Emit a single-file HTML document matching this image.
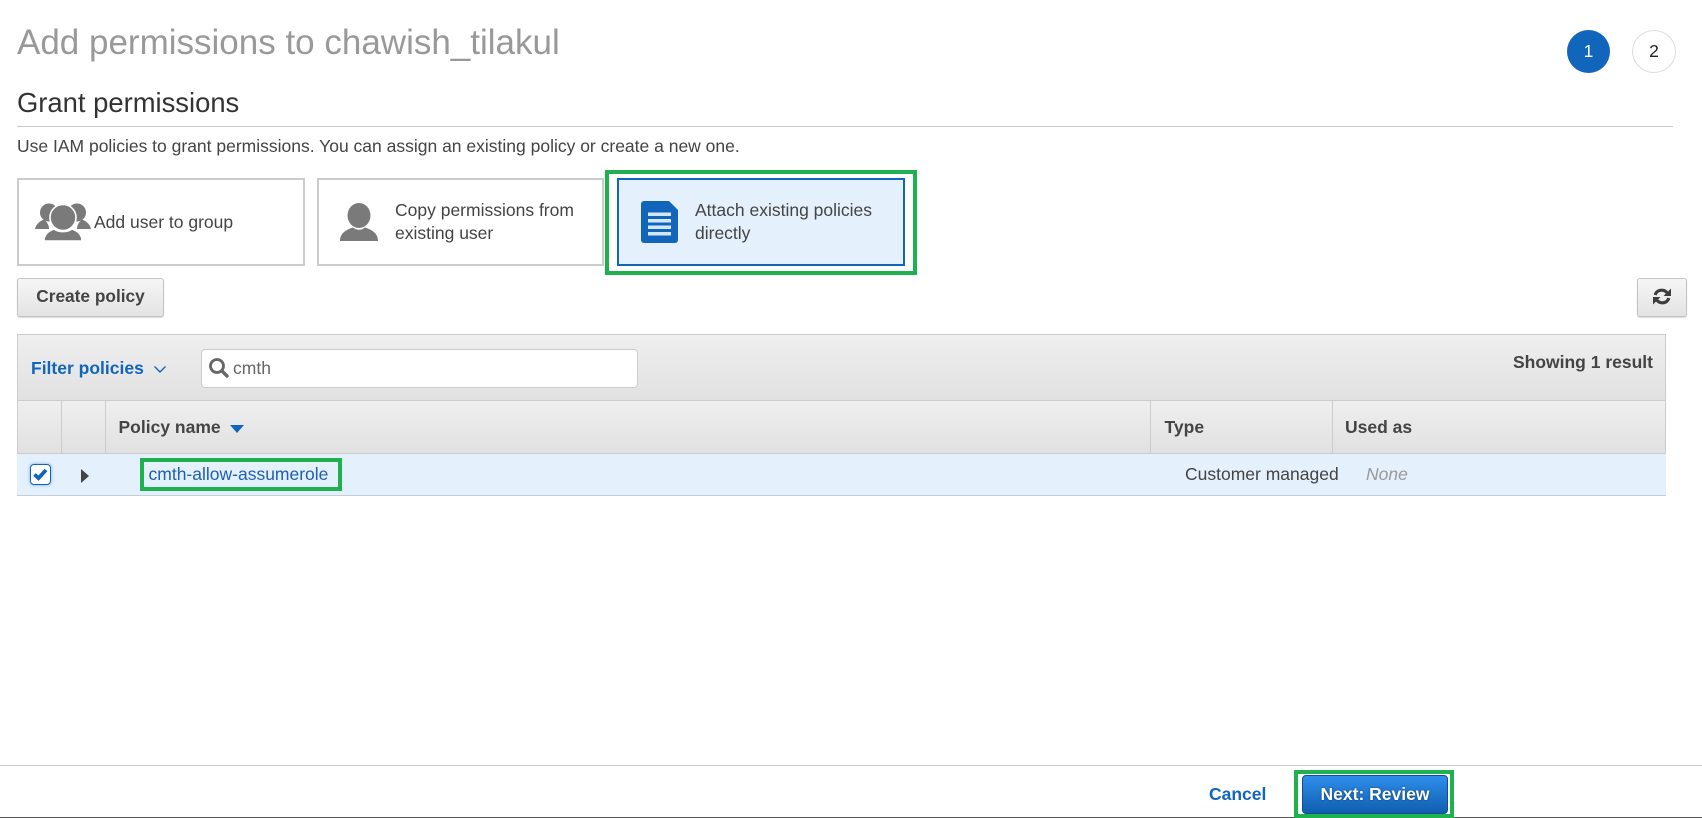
<!DOCTYPE html>
<html><head><meta charset="utf-8"><style>
html,body{margin:0;padding:0;background:#fff}
body{position:relative;width:1702px;height:818px;overflow:hidden;font-family:"Liberation Sans",Arial,sans-serif;color:#444}
.a{position:absolute;white-space:nowrap}
.b{position:absolute;box-sizing:border-box}
.g{position:absolute;box-sizing:border-box;border:4px solid #1fb14f}
.btn{position:absolute;box-sizing:border-box;border:1px solid #c4c4c4;border-radius:3px;background:linear-gradient(#f6f6f6,#e3e3e3);box-shadow:0 1px 1px rgba(0,0,0,.15)}
.bold{font-weight:bold}
</style></head><body>
<div class="a" style="left:17px;top:21px;font-size:35px;line-height:44px;color:#999">Add permissions to chawish_tilakul</div>
<div class="b" style="left:1567px;top:30px;width:43px;height:43px;border-radius:50%;background:#1166bb;color:#fff;font-size:17.5px;line-height:43px;text-align:center">1</div>
<div class="b" style="left:1632px;top:30px;width:44px;height:43px;border-radius:50%;background:#fff;border:1px solid #ddd;color:#222;font-size:17.5px;line-height:41px;text-align:center">2</div>
<div class="a" style="left:17px;top:87px;font-size:27.4px;line-height:32px;color:#333">Grant permissions</div>
<div class="b" style="left:17px;top:126px;width:1656px;height:1px;background:#ccc"></div>
<div class="a" style="left:17px;top:136px;font-size:17.5px;line-height:20px;color:#444">Use IAM policies to grant permissions. You can assign an existing policy or create a new one.</div>

<div class="b" style="left:17px;top:178px;width:288px;height:88px;border:2px solid #ccc;background:#fff"></div>
<svg class="b" style="left:35px;top:203px" width="56" height="38" viewBox="0 0 56 38">
<g fill="#7a7a7a">
<circle cx="14" cy="9.5" r="9"/><circle cx="42" cy="9.5" r="9"/>
<path d="M0 26C1 21 5 18 9 16.5C12 19 14 22 14 26Z"/><path d="M56 26C55 21 51 18 47 16.5C44 19 42 22 42 26Z"/>
</g>
<g fill="#7a7a7a" stroke="#fff" stroke-width="1.6">
<circle cx="28" cy="14.5" r="13"/>
<path d="M9 38C9 32 13 28 19 26C24 29.5 32 29.5 37 26C43 28 47 32 47 38Z"/>
</g></svg>
<div class="a" style="left:94px;top:212px;font-size:17.5px;line-height:20px">Add user to group</div>

<div class="b" style="left:317px;top:178px;width:287px;height:88px;border:2px solid #ccc;background:#fff"></div>
<svg class="b" style="left:340px;top:203px" width="38" height="38" viewBox="0 0 38 38">
<path d="M0 38C0 31 5 27 13 24.5C17 27.5 21 27.5 25 24.5C33 27 38 31 38 38Z" fill="#7a7a7a"/>
<ellipse cx="19" cy="12.5" rx="11.5" ry="12.5" fill="#7a7a7a"/></svg>
<div class="a" style="left:395px;top:199px;font-size:17.5px;line-height:23px">Copy permissions from<br>existing user</div>

<div class="g" style="left:605px;top:170px;width:312px;height:105px"></div>
<div class="b" style="left:617px;top:178px;width:288px;height:88px;border:2px solid #1166bb;background:#e4f0fc"></div>
<svg class="b" style="left:641px;top:201px" width="37" height="42" viewBox="0 0 37 42">
<path d="M3 0H28L37 9V39A3 3 0 0 1 34 42H3A3 3 0 0 1 0 39V3A3 3 0 0 1 3 0Z" fill="#1166bb"/>
<g fill="#d5e6f7"><rect x="7" y="11.5" width="23" height="3.5"/><rect x="7" y="18" width="23" height="3.5"/><rect x="7" y="24.5" width="23" height="3.5"/><rect x="7" y="31" width="23" height="3.5"/></g></svg>
<div class="a" style="left:695px;top:199px;font-size:17.5px;line-height:23px">Attach existing policies<br>directly</div>

<div class="btn bold" style="left:17px;top:278px;width:147px;height:39px;font-size:17.3px;line-height:35px;text-align:center;color:#444">Create policy</div>
<div class="btn" style="left:1637px;top:278px;width:50px;height:39px"></div>
<svg class="b" style="left:1653px;top:288px" width="18" height="17" viewBox="0 0 18 17">
<g fill="none" stroke="#3d3d3d" stroke-width="3.2"><path d="M2.2 7C3 4 5.6 2.2 8.8 2.2C11 2.2 12.8 3.2 14 4.8"/><path d="M15.8 10C15 13 12.4 14.8 9.2 14.8C7 14.8 5.2 13.8 4 12.2"/></g>
<path d="M18 .5V8H10.5Z" fill="#3d3d3d"/><path d="M0 16.5V9H7.5Z" fill="#3d3d3d"/></svg>

<div class="b" style="left:17px;top:334px;width:1649px;height:162px;border:1px solid #ccc;border-bottom:0"></div>
<div class="b" style="left:17px;top:334px;width:1649px;height:67px;border:1px solid #ccc;background:linear-gradient(#efefef,#e1e1e1)"></div>
<div class="b" style="left:17px;top:401px;width:1649px;height:53px;border-left:1px solid #ccc;border-right:1px solid #ccc;border-bottom:1px solid #ccc;background:linear-gradient(#efefef,#e1e1e1)"></div>
<div class="b" style="left:61px;top:401px;width:1px;height:52px;background:#ccc"></div>
<div class="b" style="left:105px;top:401px;width:1px;height:52px;background:#ccc"></div>
<div class="b" style="left:1150px;top:401px;width:1px;height:52px;background:#ccc"></div>
<div class="b" style="left:1332px;top:401px;width:1px;height:52px;background:#ccc"></div>
<div class="b" style="left:17px;top:454px;width:1649px;height:42px;background:#e4f0fc;border-bottom:1px solid #c5ced6"></div>

<div class="a bold" style="left:31px;top:358px;font-size:17.5px;line-height:20px;color:#1166bb">Filter policies</div>
<svg class="b" style="left:153px;top:365px" width="14" height="9" viewBox="0 0 14 9"><path d="M1.5 1.5L7 7L12.5 1.5" fill="none" stroke="#1166bb" stroke-width="1.4"/></svg>
<div class="b" style="left:201px;top:349px;width:437px;height:39px;background:#fff;border:1px solid #ccc;border-radius:4px"></div>
<svg class="b" style="left:208px;top:357px" width="22" height="22" viewBox="0 0 22 22"><circle cx="9" cy="9" r="6.5" fill="none" stroke="#666" stroke-width="2.8"/><path d="M13.8 13.8L19 19" stroke="#666" stroke-width="3.4" stroke-linecap="round"/></svg>
<div class="a" style="left:233px;top:358px;font-size:17.5px;line-height:20px;color:#666">cmth</div>
<div class="a bold" style="right:49px;top:352px;font-size:17.5px;line-height:20px;color:#444">Showing 1 result</div>

<div class="a bold" style="left:118.5px;top:416.5px;font-size:17.5px;line-height:20px;color:#444">Policy name</div>
<svg class="b" style="left:230px;top:425px" width="14" height="8" viewBox="0 0 14 8"><path d="M0 0H14L7 8Z" fill="#1166bb"/></svg>
<div class="a bold" style="left:1164.5px;top:416.5px;font-size:17.5px;line-height:20px;color:#444">Type</div>
<div class="a bold" style="left:1345px;top:416.5px;font-size:17.5px;line-height:20px;color:#444">Used as</div>

<div class="b" style="left:30px;top:464px;width:21px;height:21px;background:#fff;border:1px solid #1166bb;border-radius:4px;box-shadow:0 0 3px #6aa6e0"></div>
<svg class="b" style="left:32px;top:467px" width="17" height="15" viewBox="0 0 17 15"><path d="M2.5 7.5L6.5 11.2L14 3" fill="none" stroke="#1166bb" stroke-width="3.8"/></svg>
<svg class="b" style="left:81px;top:469px" width="8" height="14" viewBox="0 0 8 14"><path d="M0 0L8 7L0 14Z" fill="#444"/></svg>

<div class="g" style="left:140px;top:458px;width:202px;height:33px"></div>
<div class="a" style="left:148.5px;top:464px;font-size:17.5px;line-height:20px;color:#1f5fb4">cmth-allow-assumerole</div>
<div class="a" style="left:1185px;top:464px;font-size:17.5px;line-height:20px;color:#444">Customer managed</div>
<div class="a" style="left:1366px;top:464px;font-size:17.5px;line-height:20px;color:#999;font-style:italic">None</div>

<div class="b" style="left:0;top:765px;width:1702px;height:1px;background:#ccc"></div>
<div class="b" style="left:0;top:817px;width:1702px;height:1px;background:#555"></div>
<div class="a bold" style="left:1209px;top:784px;font-size:17.5px;line-height:20px;color:#1166bb">Cancel</div>
<div class="g" style="left:1294px;top:770px;width:160px;height:48px"></div>
<div class="b bold" style="left:1302px;top:775px;width:146px;height:39px;border:1px solid #0b4f96;border-radius:4px;background:linear-gradient(#2f8eeb,#0f5fb0);color:#fff;font-size:17.5px;line-height:36px;text-align:center;text-shadow:0 0 2px rgba(0,0,0,.5)">Next: Review</div>
</body></html>
